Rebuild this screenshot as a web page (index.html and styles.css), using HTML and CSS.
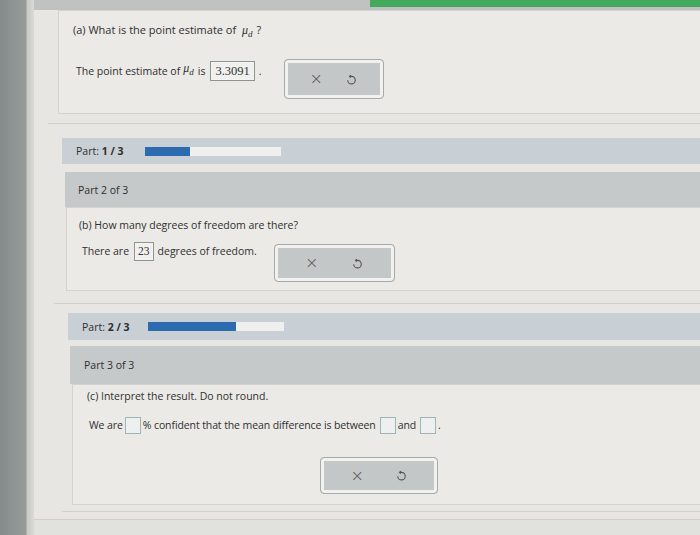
FILE: index.html
```html
<!DOCTYPE html>
<html>
<head>
<meta charset="utf-8">
<link rel="stylesheet" href="styles.css">
</head>
<body>
<div class="page">
  <div class="side"></div>
  <div class="main">
    <div class="topbar"><div class="green"></div></div>

    <div class="panel panel-a">
      <div class="q">(a) What is the point estimate of <span class="mu">μ<sub>d</sub></span>?</div>
      <div class="row row-a">
        <div class="ans">The point estimate of <span class="mu">μ<sub>d</sub></span> is <span class="box val">3.3091</span>.</div>
        <div class="btns btns-a">
          <span class="x">×</span>
          <svg class="undo" viewBox="0 0 16 16" width="13" height="13"><path d="M5.6 4.2 H8 A4.6 4.6 0 1 1 3.4 8.8" fill="none" stroke="#555" stroke-width="1.4"/><path d="M7.2 2.6 L5.6 4.2 L7.2 5.8" fill="none" stroke="#555" stroke-width="1.4"/></svg>
        </div>
      </div>
    </div>

    <div class="divider d1"></div>

    <div class="partbar pb1">
      <span>Part: <b>1 / 3</b></span>
      <div class="track"><div class="fill" style="width:45px"></div></div>
    </div>
    <div class="parthead ph2">Part 2 of 3</div>
    <div class="panel panel-b">
      <div class="q">(b) How many degrees of freedom are there?</div>
      <div class="row row-b">
        <div class="ans">There are <span class="box val small">23</span> degrees of freedom.</div>
        <div class="btns btns-b">
          <span class="x">×</span>
          <svg class="undo" viewBox="0 0 16 16" width="13" height="13"><path d="M5.6 4.2 H8 A4.6 4.6 0 1 1 3.4 8.8" fill="none" stroke="#555" stroke-width="1.4"/><path d="M7.2 2.6 L5.6 4.2 L7.2 5.8" fill="none" stroke="#555" stroke-width="1.4"/></svg>
        </div>
      </div>
    </div>

    <div class="divider d2"></div>

    <div class="partbar pb2">
      <span>Part: <b>2 / 3</b></span>
      <div class="track"><div class="fill" style="width:88px"></div></div>
    </div>
    <div class="parthead ph3">Part 3 of 3</div>
    <div class="panel panel-c">
      <div class="q">(c) Interpret the result. Do not round.</div>
      <div class="ans ans-c">We are <span class="empty"></span>% confident that the mean difference is between <span class="empty"></span> and <span class="empty"></span>.</div>
      <div class="btns btns-c">
        <span class="x">×</span>
        <svg class="undo" viewBox="0 0 16 16" width="13" height="13"><path d="M5.6 4.2 H8 A4.6 4.6 0 1 1 3.4 8.8" fill="none" stroke="#555" stroke-width="1.4"/><path d="M7.2 2.6 L5.6 4.2 L7.2 5.8" fill="none" stroke="#555" stroke-width="1.4"/></svg>
      </div>
    </div>
    <div class="divider d3"></div>
    <div class="bottom"></div>
  </div>
</div>
</body>
</html>
```
FILE: styles.css
```css
* { box-sizing: border-box; }
html, body { margin: 0; padding: 0; }
body {
  width: 700px;
  height: 535px;
  overflow: hidden;
  background: #e7e6e2;
  font-family: "Open Sans", "Noto Sans", sans-serif;
  font-size: 10.5px;
  color: #2f2f2f;
}
.page { display: flex; height: 535px; }
.side {
  width: 34px;
  flex: none;
  background: linear-gradient(90deg, #858a8a 0, #979c9b 26px, #c9cac7 27px, #d9d9d5 34px);
}
.main { flex: 1; display: flex; flex-direction: column; }

.topbar {
  height: 10px;
  background: #bfc2c1;
  display: flex;
  justify-content: flex-end;
  align-items: flex-start;
}
.green { width: 330px; height: 7px; background: #43a95c; }

.panel {
  background: #ebeae6;
  border: 1px solid #d2d2ce;
  border-right: none;
}
.panel-a { margin-left: 24px; height: 104px; padding: 12px 0 0 14px; }
.panel-b { margin-left: 32px; height: 84px; padding: 10px 0 0 12px; }
.panel-c { margin-left: 38px; height: 121px; padding: 4px 0 0 14px; }

.q { line-height: 14px; }
.panel-a .q { font-size: 11px; }
.row { display: flex; align-items: flex-start; }
.row-a { margin-top: 17px; padding-left: 3px; gap: 22px; }
.row-b { margin-top: 9px; padding-left: 3px; gap: 17px; }
.ans { line-height: 20px; display: flex; align-items: center; white-space: nowrap; }
.ans-c { margin-top: 12px; padding-left: 2px; letter-spacing: -0.1px; }
.ans-c .empty:first-child { margin-left: 2px; }

.mu { font-family: "Liberation Serif", serif; font-style: italic; font-size: 12px; margin: 0 4px 0 3px; }
.mu sub { font-size: 9px; }
.box {
  display: inline-flex;
  align-items: center;
  justify-content: center;
  border: 1px solid #8d9492;
  box-shadow: inset 0 0 0 1px #f4f4f2;
  background: #f0f0ee;
  margin: 0 4px 0 5px;
}
.val { font-family: "Liberation Serif", serif; font-size: 12.5px; color: #333; height: 20px; padding: 0 4px; }
.val.small { font-size: 11.5px; height: 19px; padding: 0 3px; }
.empty {
  display: inline-block;
  width: 16px;
  height: 17px;
  border: 1px solid #9fb6b8;
  background: #eef0ef;
  margin: 0 2px 0 4px;
}

.btns {
  display: flex;
  justify-content: space-around;
  align-items: center;
  background: #c4c7c8;
  border: 1px solid #a8aaaa;
  box-shadow: inset 0 0 0 3px #f1f1ef;
  border-radius: 4px;
  padding: 0 14px;
}
.btns-a { width: 100px; height: 40px; margin-top: 1px; }
.btns-b { width: 121px; height: 38px; margin-top: 3px; }
.btns-c { width: 118px; height: 37px; margin: 22px 0 0 233px; }
.x { font-size: 16px; color: #555; line-height: 1; font-family: "DejaVu Sans", sans-serif; font-weight: 300; }
.undo { display: block; }

.divider { height: 1px; background: #d0d0cc; }
.d1 { margin: 9px 0 14px 14px; }
.d2 { margin: 12px 0 9px 20px; }
.d3 { margin: 6px 0 0 28px; }
.bottom { flex: 1; background: #e1e1dd; border-top: 1px solid #cfcfcb; margin-top: 7px; }

.partbar {
  display: flex;
  align-items: center;
  height: 26px;
  background: #c8d0d6;
  padding-left: 14px;
  gap: 22px;
}
.pb1 { margin-left: 28px; }
.pb2 { margin-left: 34px; height: 27px; gap: 19px; }
.partbar b { font-weight: 700; }
.track { width: 136px; height: 9px; background: #efefed; }
.fill { height: 100%; background: #2d6bb0; }

.parthead {
  height: 35px;
  background: #c5c9c9;
  display: flex;
  align-items: center;
  padding-left: 13px;
}
.ph2 { margin: 8px 0 0 31px; }
.ph3 { margin: 6px 0 0 36px; height: 38px; padding-left: 14px; }
```
